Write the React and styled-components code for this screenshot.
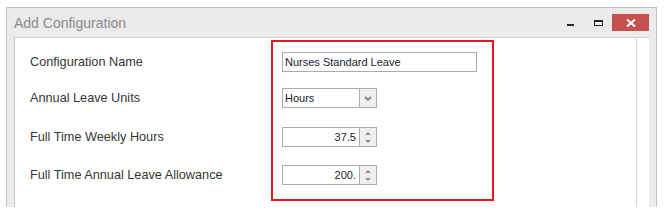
import React from 'react';
import styled, { createGlobalStyle } from 'styled-components';

const GlobalStyle = createGlobalStyle`
  html, body { margin: 0; padding: 0; background: #ffffff; }
  body { font-family: "Liberation Sans", Arial, sans-serif; }
`;

const Window = styled.div`
  box-sizing: border-box;
  margin: 7px 0 0 6px;
  width: 651px;
  height: 200px;
  background: #ebebeb;
  border: 1px solid #c2c2c2;
  border-bottom: none;
  padding: 0 7px;
  display: flex;
  flex-direction: column;
`;

const TitleBar = styled.div`
  flex: none;
  height: 29px;
  display: flex;
  align-items: center;
`;

const Title = styled.div`
  flex: 1;
  font-size: 14px;
  color: #8a8a8a;
  white-space: nowrap;
`;

const Controls = styled.div`
  display: flex;
  align-items: center;
`;

const ControlButton = styled.div`
  width: ${(p) => p.$w}px;
  height: 17px;
  display: flex;
  align-items: center;
  justify-content: center;
  background: ${(p) => p.$bg || 'transparent'};
`;

const MinGlyph = styled.div`
  width: 7px;
  height: 2px;
  margin-top: 5px;
  background: #262626;
`;

const MaxGlyph = styled.div`
  box-sizing: border-box;
  width: 9px;
  height: 6px;
  border: 1px solid #262626;
  border-top-width: 2px;
`;

const Panel = styled.div`
  flex: 1;
  display: flex;
  background: #ffffff;
  border-top: 1px solid #d2d2d2;
  border-left: 1px solid #c6c6c6;
`;

const Main = styled.div`
  flex: 1;
  display: flex;
  align-items: flex-start;
  padding: 2px 0 0 15px;
`;

const Strip = styled.div`
  flex: none;
  width: 12px;
  border-left: 1px solid #d4d4d4;
`;

const LabelColumn = styled.div`
  width: 241px;
  padding-top: 12px;
  display: flex;
  flex-direction: column;
`;

const Label = styled.div`
  height: 20px;
  line-height: 20px;
  margin-top: ${(p) => p.$gap}px;
  font-size: 12.7px;
  color: #363636;
  white-space: nowrap;
`;

const FieldFrame = styled.div`
  box-sizing: border-box;
  width: 223px;
  border: 2px solid #e5161f;
  padding: 10px 0 14px 9px;
  display: flex;
  flex-direction: column;
  align-items: flex-start;
`;

const FieldRow = styled.div`
  height: 20px;
  margin-top: ${(p) => p.$gap}px;
  display: flex;
`;

const TextInput = styled.input`
  box-sizing: border-box;
  width: ${(p) => p.$w}px;
  height: 20px;
  margin: 0;
  padding: 0 2px;
  border: 1px solid #ababab;
  background: #ffffff;
  font-family: "Liberation Sans", Arial, sans-serif;
  font-size: 11px;
  color: #1c1c2e;
  outline: none;
`;

const Combo = styled.div`
  box-sizing: border-box;
  width: 95px;
  height: 20px;
  border: 1px solid #ababab;
  display: flex;
  background: #ffffff;
`;

const ComboText = styled.div`
  flex: 1;
  padding: 0 ${(p) => (p.$right ? '3px' : '2px')};
  text-align: ${(p) => (p.$right ? 'right' : 'left')};
  font-size: 11px;
  line-height: 18px;
  color: #1c1c2e;
  white-space: nowrap;
  overflow: hidden;
`;

const ComboButton = styled.div`
  flex: none;
  width: 16px;
  border-left: 1px solid #ababab;
  background: #efefef;
  display: flex;
  flex-direction: column;
  align-items: center;
  justify-content: center;
  gap: ${(p) => p.$gap || 0}px;
`;

const Chevron = ({ up, w = 7, h = 5, sw = 1.7 }) => (
  <svg width={w} height={h} viewBox={`0 0 ${w} ${h}`} style={{ display: 'block' }}>
    <path
      d={up ? `M1 ${h - 1} L${w / 2} 1 L${w - 1} ${h - 1}` : `M1 1 L${w / 2} ${h - 1.2} L${w - 1} 1`}
      fill="none"
      stroke="#7c7c7c"
      strokeWidth={sw}
    />
  </svg>
);

const CloseGlyph = () => (
  <svg width="10" height="8" viewBox="0 0 10 8" style={{ display: 'block' }}>
    <path d="M1 0.5 L9 7.5 M9 0.5 L1 7.5" stroke="#ffffff" strokeWidth="2" fill="none" />
  </svg>
);

const Select = ({ value }) => (
  <Combo>
    <ComboText>{value}</ComboText>
    <ComboButton>
      <Chevron w={8} h={5} sw={1.8} />
    </ComboButton>
  </Combo>
);

const Spin = ({ value }) => (
  <Combo>
    <ComboText $right>{value}</ComboText>
    <ComboButton $gap={3}>
      <Chevron up w={6} h={4} sw={1.3} />
      <Chevron w={6} h={4} sw={1.3} />
    </ComboButton>
  </Combo>
);

const rows = [
  { label: 'Configuration Name', gap: 0, field: <TextInput $w={195} readOnly value="Nurses Standard Leave" /> },
  { label: 'Annual Leave Units', gap: 16, field: <Select value="Hours" /> },
  { label: 'Full Time Weekly Hours', gap: 19, field: <Spin value="37.5" /> },
  { label: 'Full Time Annual Leave Allowance', gap: 18, field: <Spin value="200." /> },
];

export default function App() {
  return (
    <>
      <GlobalStyle />
      <Window>
        <TitleBar>
          <Title>Add Configuration</Title>
          <Controls>
            <ControlButton $w={27}>
              <MinGlyph />
            </ControlButton>
            <ControlButton $w={28}>
              <MaxGlyph />
            </ControlButton>
            <ControlButton $w={37} $bg="#c75050">
              <CloseGlyph />
            </ControlButton>
          </Controls>
        </TitleBar>
        <Panel>
          <Main>
            <LabelColumn>
              {rows.map((r) => (
                <Label key={r.label} $gap={r.gap}>
                  {r.label}
                </Label>
              ))}
            </LabelColumn>
            <FieldFrame>
              {rows.map((r) => (
                <FieldRow key={r.label} $gap={r.gap}>
                  {r.field}
                </FieldRow>
              ))}
            </FieldFrame>
          </Main>
          <Strip />
        </Panel>
      </Window>
    </>
  );
}
